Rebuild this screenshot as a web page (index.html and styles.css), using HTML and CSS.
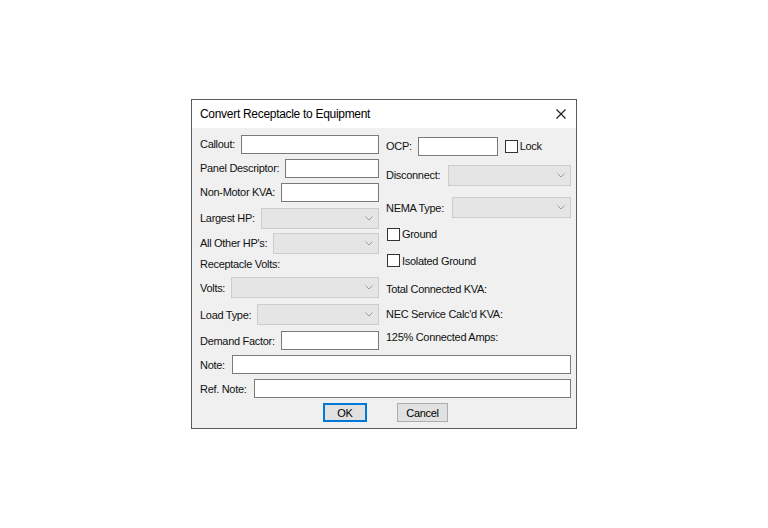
FILE: index.html
```html
<!DOCTYPE html>
<html lang="en">
<head>
    <meta charset="UTF-8">
    <title>Convert Receptacle to Equipment</title>
    <link rel="stylesheet" href="styles.css">
</head>
<body>
    <div class="dialog">
        <div class="titlebar">
            <span class="title">Convert Receptacle to Equipment</span>
            <svg class="close" width="10" height="10" viewBox="0 0 10 10">
                <path d="M0.5 0.5 L9.5 9.5 M9.5 0.5 L0.5 9.5" stroke="#1a1a1a" stroke-width="1.1" fill="none"/>
            </svg>
        </div>

        <div class="content">
            <div class="columns">
                <div class="col col-left">
                    <div class="field"><label>Callout:</label><div class="textbox"></div></div>
                    <div class="field"><label>Panel Descriptor:</label><div class="textbox"></div></div>
                    <div class="field"><label>Non-Motor KVA:</label><div class="textbox"></div></div>
                    <div class="field"><label>Largest HP:</label><div class="combo"><svg class="chevron" width="8" height="5" viewBox="0 0 8 5"><path d="M0.5 0.5 L4 4 L7.5 0.5" stroke="#9a9a9a" fill="none"/></svg></div></div>
                    <div class="field"><label>All Other HP's:</label><div class="combo"><svg class="chevron" width="8" height="5" viewBox="0 0 8 5"><path d="M0.5 0.5 L4 4 L7.5 0.5" stroke="#9a9a9a" fill="none"/></svg></div></div>
                    <div class="field"><label>Receptacle Volts:</label></div>
                    <div class="field"><label>Volts:</label><div class="combo"><svg class="chevron" width="8" height="5" viewBox="0 0 8 5"><path d="M0.5 0.5 L4 4 L7.5 0.5" stroke="#9a9a9a" fill="none"/></svg></div></div>
                    <div class="field"><label>Load Type:</label><div class="combo"><svg class="chevron" width="8" height="5" viewBox="0 0 8 5"><path d="M0.5 0.5 L4 4 L7.5 0.5" stroke="#9a9a9a" fill="none"/></svg></div></div>
                    <div class="field"><label>Demand Factor:</label><div class="textbox"></div></div>
                </div>

                <div class="col col-right">
                    <div class="field">
                        <label>OCP:</label>
                        <div class="textbox short"></div>
                        <div class="check"><span class="box"></span>Lock</div>
                    </div>
                    <div class="field"><label>Disconnect:</label><div class="combo"><svg class="chevron" width="8" height="5" viewBox="0 0 8 5"><path d="M0.5 0.5 L4 4 L7.5 0.5" stroke="#9a9a9a" fill="none"/></svg></div></div>
                    <div class="field"><label>NEMA Type:</label><div class="combo"><svg class="chevron" width="8" height="5" viewBox="0 0 8 5"><path d="M0.5 0.5 L4 4 L7.5 0.5" stroke="#9a9a9a" fill="none"/></svg></div></div>
                    <div class="field"><div class="check"><span class="box"></span>Ground</div></div>
                    <div class="field"><div class="check"><span class="box"></span>Isolated Ground</div></div>
                    <div class="field"><label>Total Connected KVA:</label></div>
                    <div class="field"><label>NEC Service Calc'd KVA:</label></div>
                    <div class="field"><label>125% Connected Amps:</label></div>
                </div>
            </div>

            <div class="field note-row"><label>Note:</label><div class="textbox"></div></div>
            <div class="field ref-row"><label>Ref. Note:</label><div class="textbox"></div></div>

            <div class="buttons">
                <button class="btn btn-default">OK</button>
                <button class="btn">Cancel</button>
            </div>
        </div>
    </div>
</body>
</html>
```

FILE: styles.css
```css
body {
    margin: 0;
    background: #fff;
    font-family: "Liberation Sans", Arial, sans-serif;
}

.dialog {
    width: 384px;
    height: 328px;
    margin: 99px 0 0 191px;
    border: 1px solid #5c5c5c;
    display: flex;
    flex-direction: column;
}

.titlebar {
    height: 28px;
    flex: none;
    display: flex;
    align-items: center;
    justify-content: space-between;
    padding: 0 10px 0 8px;
    background: #fff;
}

.title {
    font-size: 12px;
    letter-spacing: -0.3px;
    color: #000;
}

.content {
    flex: 1;
    padding: 4px 5px 0 8px;
    background: #f0f0f0;
    font-size: 11px;
    letter-spacing: -0.3px;
    color: #111;
}

.columns {
    display: flex;
    gap: 7px;
}

.col {
    display: grid;
}

.col-left {
    width: 179px;
    grid-template-rows: 24px 24px 24px 28px 22px 19px 29px 25px 27px;
}

.col-right {
    flex: 1;
    grid-template-rows: 28px 30px 35px 18px 35px 22px 28px 18px;
}

.field {
    display: flex;
    align-items: center;
    gap: 6px;
}

.field label {
    white-space: nowrap;
}

.textbox {
    flex: 1;
    height: 19px;
    box-sizing: border-box;
    border: 1px solid #7a7a7a;
    background: #fff;
}

.textbox.short {
    flex: none;
    width: 80px;
    margin-right: 1px;
}

.combo {
    flex: 1;
    height: 21px;
    box-sizing: border-box;
    display: flex;
    align-items: center;
    justify-content: flex-end;
    padding-right: 5px;
    border: 1px solid #cccccc;
    background: #e5e5e5;
}

.col-right .combo {
    margin-left: 2px;
}

.check {
    display: flex;
    align-items: center;
    gap: 2px;
    white-space: nowrap;
}

.check .box {
    width: 13px;
    height: 13px;
    box-sizing: border-box;
    border: 1px solid #333;
    background: #fff;
}

.col-right .field:nth-child(4) .check,
.col-right .field:nth-child(5) .check {
    margin-left: 1px;
}

.note-row {
    height: 21px;
    gap: 7px;
}

.ref-row {
    height: 27px;
    gap: 7px;
}

.buttons {
    display: flex;
    justify-content: center;
    gap: 30px;
    margin-top: 1px;
}

.btn {
    height: 19px;
    padding: 0;
    border: 1px solid #adadad;
    background: #e1e1e1;
    font-family: inherit;
    font-size: 11px;
    letter-spacing: -0.3px;
    color: #000;
}

.btn-default {
    width: 44px;
    border-color: #0078d7;
    box-shadow: inset 0 0 0 1px #0078d7;
}

.buttons .btn:last-child {
    width: 51px;
}
```
